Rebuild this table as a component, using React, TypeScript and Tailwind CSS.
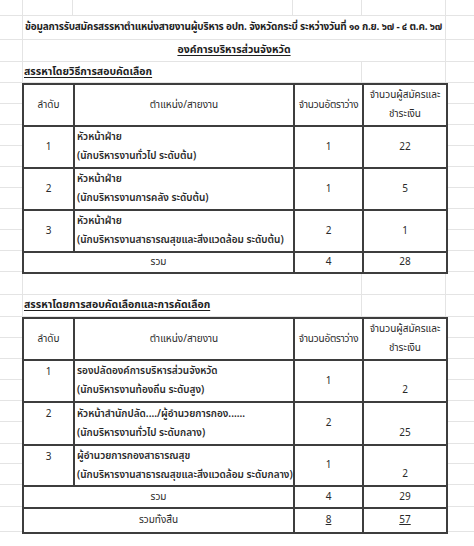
import React from "react";

const G = "border-[#e4e4e4]";

function Margin({ heights, right }: { heights: number[]; right?: boolean }) {
  return (
    <div className={right ? "flex-1 flex flex-col" : "w-[22px] flex flex-col"}>
      {heights.map((h, i) => (
        <div key={i} className={`border-b ${G}`} style={{ height: h }} />
      ))}
    </div>
  );
}

const cell = "border-2 border-[#3d3d3d] p-0";

type R1 = { n: string; a: string; b: string; v: string; c: string };

const t1: R1[] = [
  { n: "1", a: "หัวหน้าฝ่าย", b: "(นักบริหารงานทั่วไป ระดับต้น)", v: "1", c: "22" },
  { n: "2", a: "หัวหน้าฝ่าย", b: "(นักบริหารงานการคลัง ระดับต้น)", v: "1", c: "5" },
  { n: "3", a: "หัวหน้าฝ่าย", b: "(นักบริหารงานสาธารณสุขและสิ่งแวดล้อม ระดับต้น)", v: "2", c: "1" },
];

const t2: (R1 & { h: number })[] = [
  { n: "1", a: "รองปลัดองค์การบริหารส่วนจังหวัด", b: "(นักบริหารงานท้องถิ่น ระดับสูง)", v: "1", c: "2", h: 42 },
  { n: "2", a: "หัวหน้าสำนักปลัด..../ผู้อำนวยการกอง......", b: "(นักบริหารงานทั่วไป ระดับกลาง)", v: "2", c: "25", h: 43 },
  { n: "3", a: "ผู้อำนวยการกองสาธารณสุข", b: "(นักบริหารงานสาธารณสุขและสิ่งแวดล้อม ระดับกลาง)", v: "1", c: "2", h: 41 },
];

function Cols() {
  return (
    <colgroup>
      <col style={{ width: 51 }} />
      <col style={{ width: 220 }} />
      <col style={{ width: 69 }} />
      <col style={{ width: 84 }} />
    </colgroup>
  );
}

function Header() {
  return (
    <tr className="h-[42px]">
      <td className={`${cell} align-middle text-center`}>ลำดับ</td>
      <td className={`${cell} align-middle text-center`}>ตำแหน่ง/สายงาน</td>
      <td className={`${cell} align-middle text-center whitespace-nowrap tracking-[-0.2px]`}>จำนวนอัตราว่าง</td>
      <td className={`${cell} align-middle text-center leading-[19px]`}>
        <div>จำนวนผู้สมัครและ</div>
        <div>ชำระเงิน</div>
      </td>
    </tr>
  );
}

export default function App() {
  return (
    <div className="w-[474px] h-[546px] bg-white overflow-hidden text-[#2a2a2a] font-['Tahoma','Noto_Sans_Thai','Noto_Sans',sans-serif] text-[10px] leading-[19px]">
      {/* sheet row 0 */}
      <div className={`flex h-[16px] border-b ${G}`}>
        <div className={`w-[23px] border-r ${G}`} />
        <div className={`w-[50px] border-r ${G}`} />
        <div className={`w-[220px] border-r ${G}`} />
        <div className={`w-[69px] border-r ${G}`} />
        <div className={`w-[84px] border-r ${G}`} />
        <div className="flex-1" />
      </div>
      {/* title */}
      <div className={`flex h-[24px] border-b ${G}`}>
        <div className={`w-[23px] border-r ${G}`} />
        <div className={`w-[423px] border-r ${G} overflow-hidden whitespace-nowrap pl-[2px] flex items-center font-bold text-[#1e1e1e] text-[10px] tracking-[-0.2px]`}>
          ข้อมูลการรับสมัครสรรหาตำแหน่งสายงานผู้บริหาร อปท. จังหวัดกระบี่ ระหว่างวันที่ ๑๐ ก.ย. ๖๗ - ๔ ต.ค. ๖๗
        </div>
        <div className="flex-1" />
      </div>
      {/* subtitle */}
      <div className={`flex h-[22px] border-b ${G}`}>
        <div className={`w-[23px] border-r ${G}`} />
        <div className={`w-[423px] border-r ${G} flex items-center justify-center font-bold text-[#1e1e1e] text-[10.5px]`}>
          <span className="underline underline-offset-2">องค์การบริหารส่วนจังหวัด</span>
        </div>
        <div className="flex-1" />
      </div>
      {/* label 1 */}
      <div className={`flex h-[21px] border-b ${G}`}>
        <div className={`w-[23px] border-r ${G}`} />
        <div className={`w-[339px] border-r ${G} flex items-center pl-[1px] font-bold text-[#1e1e1e] text-[10.5px]`}>
          <span className="underline underline-offset-2">สรรหาโดยวิธีการสอบคัดเลือก</span>
        </div>
        <div className={`w-[84px] border-r ${G}`} />
        <div className="flex-1" />
      </div>

      {/* table 1 */}
      <div className="flex">
        <Margin heights={[21, 21, 21, 21, 21, 21, 21, 21, 21]} />
        <table className="table-fixed border-collapse w-[425px]">
          <Cols />
          <tbody>
            <Header />
            {t1.map((r) => (
              <tr key={r.n} className="h-[42px]">
                <td className={`${cell} align-middle text-center`}>{r.n}</td>
                <td className={`${cell} align-middle pl-[2px] whitespace-nowrap`}>
                  <div className="font-semibold">{r.a}</div>
                  <div className="font-semibold">{r.b}</div>
                </td>
                <td className={`${cell} align-middle text-center`}>{r.v}</td>
                <td className={`${cell} align-middle text-center`}>{r.c}</td>
              </tr>
            ))}
            <tr className="h-[21px]">
              <td colSpan={2} className={`${cell} align-middle text-center`}>รวม</td>
              <td className={`${cell} align-middle text-center`}>4</td>
              <td className={`${cell} align-middle text-center`}>28</td>
            </tr>
          </tbody>
        </table>
        <Margin right heights={[21, 21, 21, 21, 21, 21, 21, 21, 21]} />
      </div>

      {/* blank row */}
      <div className={`flex h-[21px] border-b ${G}`}>
        <div className={`w-[23px] border-r ${G}`} />
        <div className={`w-[339px] border-r ${G}`} />
        <div className={`w-[84px] border-r ${G}`} />
        <div className="flex-1" />
      </div>
      {/* label 2 */}
      <div className={`flex h-[22px] border-b ${G}`}>
        <div className={`w-[23px] border-r ${G}`} />
        <div className={`w-[339px] border-r ${G} flex items-center pl-[1px] font-bold text-[#1e1e1e] text-[10.5px]`}>
          <span className="underline underline-offset-2">สรรหาโดยการสอบคัดเลือกและการคัดเลือก</span>
        </div>
        <div className={`w-[84px] border-r ${G}`} />
        <div className="flex-1" />
      </div>

      {/* table 2 */}
      <div className="flex">
        <Margin heights={[21, 21, 21, 21, 21, 22, 20, 21, 22, 25]} />
        <table className="table-fixed border-collapse w-[425px]">
          <Cols />
          <tbody>
            <Header />
            {t2.map((r) => (
              <tr key={r.n} style={{ height: r.h }}>
                <td className={`${cell} align-top text-center pt-[2px]`}>{r.n}</td>
                <td className={`${cell} align-middle pl-[2px] whitespace-nowrap`}>
                  <div className="font-semibold">{r.a}</div>
                  <div className="font-semibold">{r.b}</div>
                </td>
                <td className={`${cell} align-middle text-center`}>{r.v}</td>
                <td className={`${cell} align-bottom text-center pb-[1px]`}>{r.c}</td>
              </tr>
            ))}
            <tr className="h-[22px]">
              <td colSpan={2} className={`${cell} align-middle text-center`}>รวม</td>
              <td className={`${cell} align-middle text-center`}>4</td>
              <td className={`${cell} align-middle text-center`}>29</td>
            </tr>
            <tr className="h-[25px]">
              <td colSpan={2} className={`${cell} align-middle text-center`}>รวมทั้งสิ้น</td>
              <td className={`${cell} align-middle text-center`}><span className="underline">8</span></td>
              <td className={`${cell} align-middle text-center`}><span className="underline">57</span></td>
            </tr>
          </tbody>
        </table>
        <Margin right heights={[21, 21, 21, 21, 21, 22, 20, 21, 22, 25]} />
      </div>
      <div className={`flex h-[16px] border-b ${G}`} />
    </div>
  );
}
